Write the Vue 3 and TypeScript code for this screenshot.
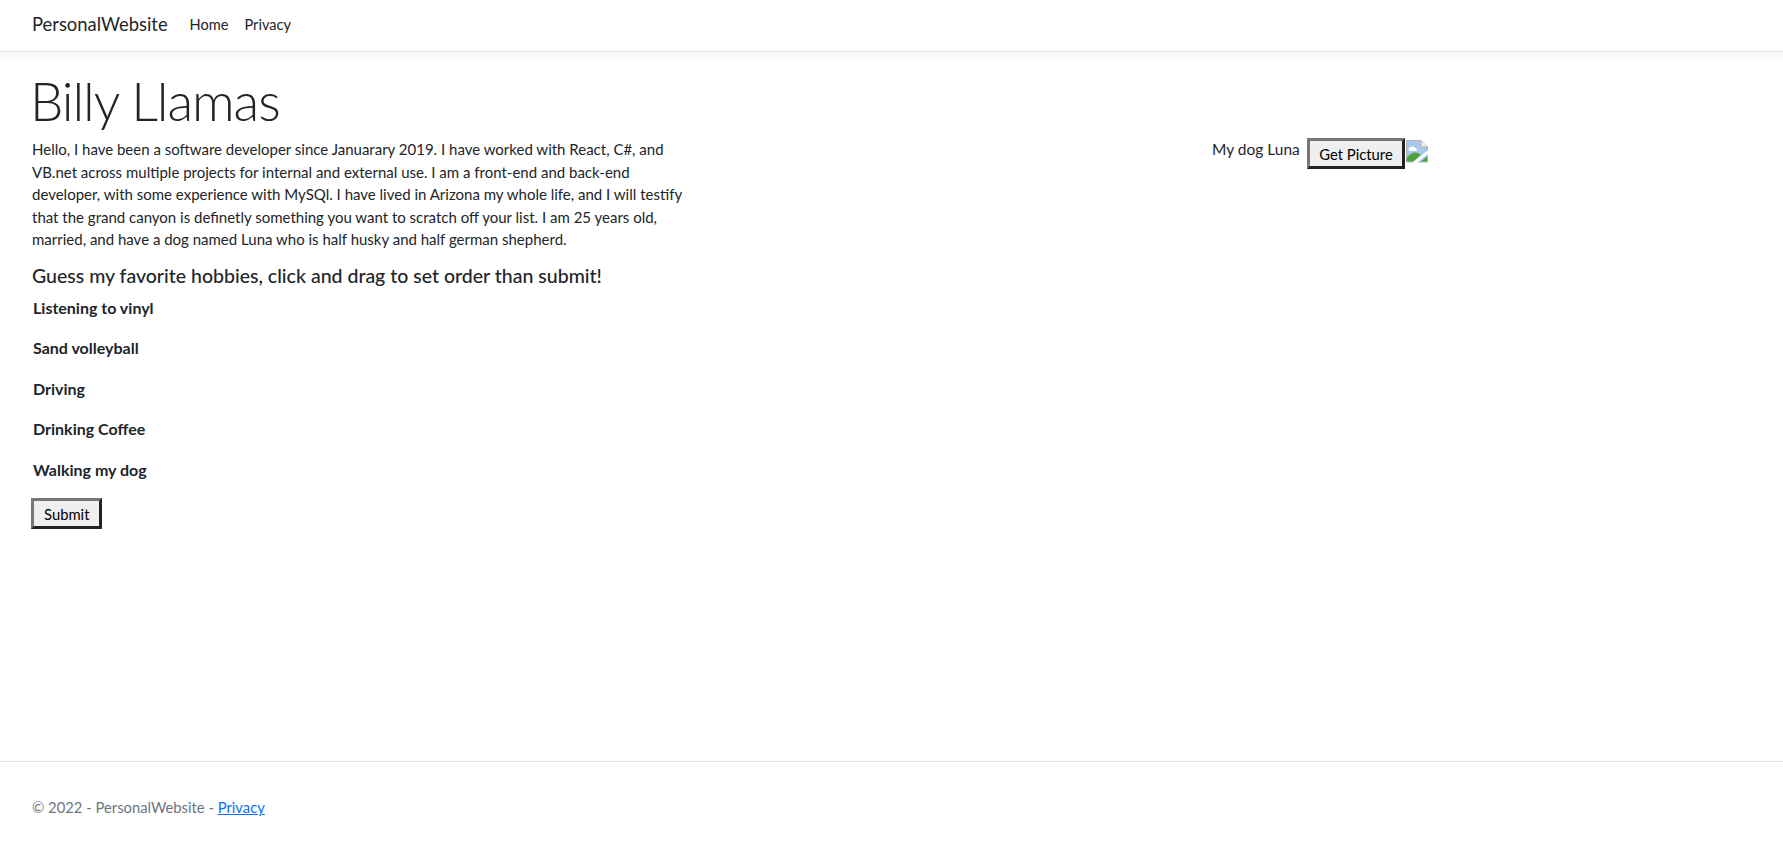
<script setup lang="ts">
const hobbies: string[] = ['Listening to vinyl', 'Sand volleyball', 'Driving', 'Drinking Coffee', 'Walking my dog']
</script>

<template>
  <div class="page">
    <header class="navbar">
      <a class="brand">PersonalWebsite</a>
      <nav class="links"><a>Home</a><a>Privacy</a></nav>
    </header>
    <main class="main">
      <section class="left">
        <h1>Billy Llamas</h1>
        <p class="bio">Hello, I have been a software developer since Januarary 2019. I have worked with React, C#, and VB.net across multiple projects for internal and external use. I am a front-end and back-end developer, with some experience with MySQl. I have lived in Arizona my whole life, and I will testify that the grand canyon is definetly something you want to scratch off your list. I am 25 years old, married, and have a dog named Luna who is half husky and half german shepherd.</p>
        <h5>Guess my favorite hobbies, click and drag to set order than submit!</h5>
        <ul class="hobbies">
          <li v-for="h in hobbies" :key="h">{{ h }}</li>
        </ul>
        <button class="btn submit">Submit</button>
      </section>
      <section class="right">
        <span class="dog">My dog Luna</span>
        <button class="btn">Get Picture</button>
        <svg class="broken" width="24" height="24" viewBox="0 0 24 24">
          <path d="M1.5 1.5H16L22.5 8V23H1.5Z" fill="#a9c8ee" stroke="#b0b0b0" />
          <path d="M16 1.5V8H22.5" fill="#eee" stroke="#b0b0b0" />
          <path d="M4 10c1-3 5-3 6-1 2 0 3 2 1 3H5c-2 0-2-2-1-2z" fill="#fff" />
          <path d="M2 22.5v-4c5-6 9-6 14-3l-7 7z" fill="#4ea23a" />
          <path d="M16 22.5l6-5v5z" fill="#4ea23a" />
          <path d="M9 24L24 12.5" stroke="#fff" stroke-width="3" />
        </svg>
      </section>
    </main>
    <footer class="footer">© 2022 - PersonalWebsite - <a>Privacy</a></footer>
  </div>
</template>

<style>
html, body { margin: 0; background: #fff; }
</style>

<style scoped>
.page {
  height: 844px;
  display: flex;
  flex-direction: column;
  font-family: Lato, "Open Sans", sans-serif;
  font-size: 14.8px;
  color: #212529;
  overflow: hidden;
}
.navbar {
  height: 52px;
  box-sizing: border-box;
  display: flex;
  align-items: center;
  padding: 0 32px 3px;
  border-bottom: 1px solid #dee2e6;
  box-shadow: 0 4px 12px rgba(0, 0, 0, 0.05);
}
.brand { font-size: 18.4px; margin-right: 22px; }
.links { display: flex; gap: 16px; font-size: 14.6px; }
.main {
  flex: 1;
  display: grid;
  grid-template-columns: 1180px 1fr;
  padding: 0 32px;
}
.left { width: 660px; padding-top: 15px; }
h1 { margin: 0 0 4px -2px; font-size: 53px; letter-spacing: -1.1px; font-weight: 300; line-height: 67px; }
.bio { margin: 0 0 13px; font-size: 15px; line-height: 22.5px; }
h5 { margin: 0; font-size: 19.5px; font-weight: 500; line-height: 24px; }
.hobbies { list-style: none; margin: 0 0 8px; padding: 0 0 0 1px; font-size: 16px; }
.hobbies li { font-weight: 700; line-height: 40.5px; }
.btn {
  font: inherit;
  height: 31px;
  padding: 0 9.5px;
  background: #efefef;
  border: 3px outset #777;
  color: #000;
  border-radius: 0;
}
.submit { margin-left: -1px; padding: 0 10px; }
.right { padding-top: 86px; display: flex; align-items: flex-start; }
.dog { margin: 0 7px 0 0; font-size: 15.5px; line-height: 22px; }
.broken { flex: none; margin-top: 1px; }
.footer {
  height: 83px;
  box-sizing: border-box;
  border-top: 1px solid #dee2e6;
  padding: 33px 32px 0;
  color: #6c757d;
  line-height: 24px;
}
.footer a { color: #0d6efd; text-decoration: underline; }
</style>
